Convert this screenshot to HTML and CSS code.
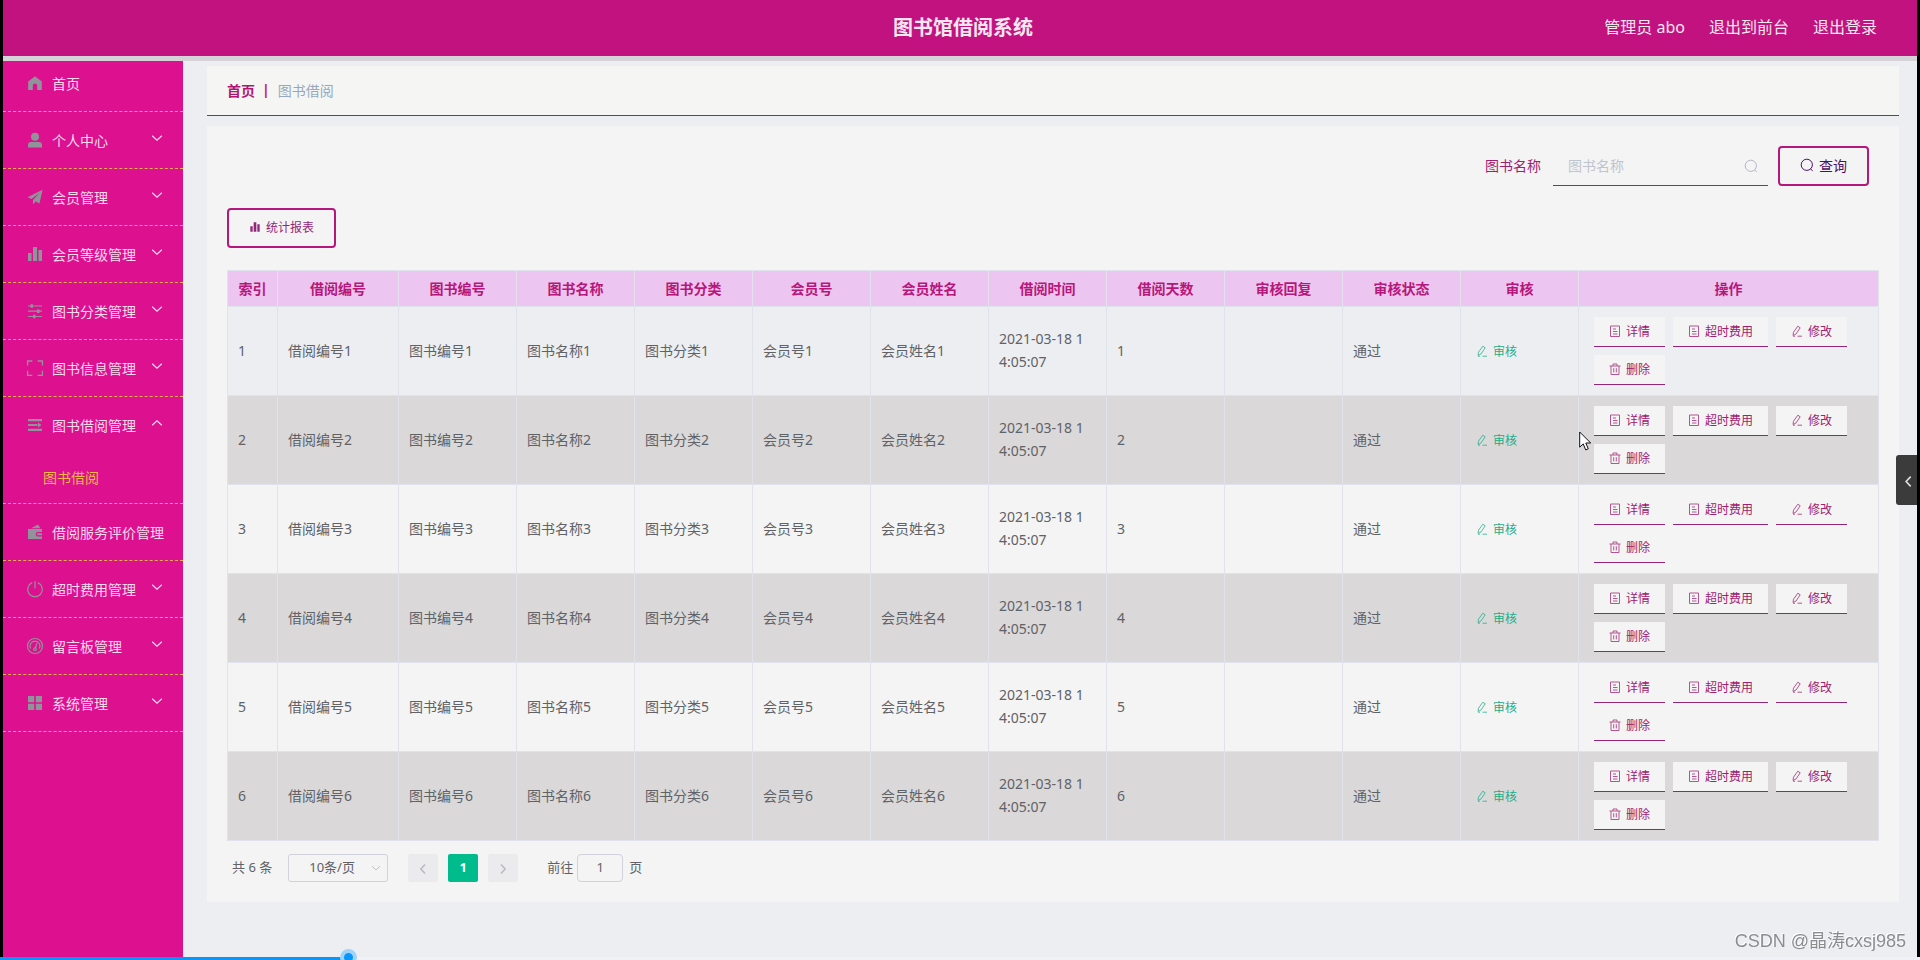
FILE: index.html
```html
<!DOCTYPE html>
<html lang="zh-CN">
<head>
  <meta charset="UTF-8">
  <meta name="viewport" content="width=device-width, initial-scale=1.0">
  <title>图书馆借阅系统</title>
  <link rel="stylesheet" href="styles.css">
</head>
<body>
  <!-- icons -->
  <svg class="sprite" aria-hidden="true">
    <symbol id="i-home" viewBox="0 0 18 18"><path fill="currentColor" d="M9 2.2 2.2 7.6V16h4.6v-4.2a2.2 2.2 0 0 1 4.4 0V16h4.6V7.6z"/></symbol>
    <symbol id="i-user" viewBox="0 0 18 18"><circle cx="9" cy="5.8" r="4" fill="currentColor"/><path fill="currentColor" d="M2 16.4v-2.2c0-2 1.2-3.2 3-3.2h8c1.800 0 3 1.200 3 3.200v2.200z"/></symbol>
    <symbol id="i-send" viewBox="0 0 18 18"><path fill="currentColor" d="M16.500 1.800 1.500 9.200l4 1.900L13.500 5l-6.500 7v4.500l2.500-3 4 2z"/></symbol>
    <symbol id="i-data" viewBox="0 0 18 18"><path fill="currentColor" d="M2 8h3.500v8H2zM7 2h4v14H7zM12.500 5H16v11h-3.500z"/></symbol>
    <symbol id="i-sliders" viewBox="0 0 18 18"><path stroke="currentColor" stroke-width="1.200" d="M2 4h14M2 9.200h14M2 14.500h14"/><path fill="currentColor" d="M4.500 2.200h2.500v3.600H4.500zM11 7.400h2.500V11H11zM7 12.700h2.500v3.600H7z"/></symbol>
    <symbol id="i-full" viewBox="0 0 18 18"><path fill="none" stroke="currentColor" stroke-width="1.300" d="M1.600 6.500V2h4.800M11.600 2h4.800v4.500M16.400 11.800v4.500h-4.800M6.400 16.300H1.600v-4.500"/></symbol>
    <symbol id="i-unfold" viewBox="0 0 18 18"><path fill="currentColor" d="M2 3h14v2.200H2zM2 8h9.500v2H2zM2 12.800h14V15H2zM12 6.500 15.500 9 12 11.500z"/></symbol>
    <symbol id="i-wallet" viewBox="0 0 18 18"><path fill="currentColor" d="M5 5.200 12 1.500l2.400 3.700zM2 6h14v3h-4a2.200 2.200 0 0 0 0 4.400h4V16H2z"/><path fill="currentColor" d="M12 10.300h4v2h-4a1 1 0 0 1 0-2z"/></symbol>
    <symbol id="i-power" viewBox="0 0 18 18"><path fill="none" stroke="currentColor" stroke-width="1.200" d="M6.200 2.600a7.300 7.300 0 1 0 5.600 0M9 1v7.500"/></symbol>
    <symbol id="i-meter" viewBox="0 0 18 18"><g fill="none" stroke="currentColor" stroke-width="1.200"><circle cx="9" cy="9" r="7.500"/><path d="M4.600 11.500A5 5 0 1 1 13.400 11.500M10.800 6.200 9.500 11"/><circle cx="9" cy="12.200" r="1.300"/></g></symbol>
    <symbol id="i-menu" viewBox="0 0 18 18"><path fill="currentColor" d="M2 2h6.200v6.200H2zM9.800 2H16v6.200H9.800zM2 9.800h6.200V16H2zM9.800 9.800H16V16H9.800z"/></symbol>
    <symbol id="i-down" viewBox="0 0 12 12"><path fill="none" stroke="currentColor" stroke-width="1.200" d="M1.200 3.800 6 8.300l4.800-4.500"/></symbol>
    <symbol id="i-left" viewBox="0 0 12 12"><path fill="none" stroke="currentColor" stroke-width="1.500" d="M8 1.500 3.800 6 8 10.500"/></symbol>
    <symbol id="i-right" viewBox="0 0 12 12"><path fill="none" stroke="currentColor" stroke-width="1.500" d="M4 1.500 8.200 6 4 10.500"/></symbol>
    <symbol id="i-search" viewBox="0 0 14 14"><g fill="none" stroke="currentColor"><circle cx="6.800" cy="6.800" r="5.600"/><path d="m10.500 11 2.200 1.800"/></g></symbol>
    <symbol id="i-doc" viewBox="0 0 12 12"><path fill="none" stroke="currentColor" d="M1.500 1h9v10.500h-9zM4 4h3M4 6.500h4.500M4 9h4.500"/></symbol>
    <symbol id="i-edit" viewBox="0 0 12 12"><path fill="none" stroke="currentColor" d="M2 10.500 2.500 7.200 6.800 1.200 9.200 2.800 5 9zM6.500 11.200h4.500M2 11.200h2"/></symbol>
    <symbol id="i-trash" viewBox="0 0 12 12"><path fill="none" stroke="currentColor" d="M.5 3h11M4 3V1h4v2M2 3v8.500h8V3M4.700 5.200v4.200M7.300 5.200v4.200"/></symbol>
  </svg>

  <div class="page">
    <header class="topbar">
      <h1>图书馆借阅系统</h1>
      <div class="topbar-right">
        <span>管理员 abo</span>
        <a href="#">退出到前台</a>
        <a href="#">退出登录</a>
      </div>
    </header>

    <div class="layout">
      <nav class="sidebar">
        <ul>
          <li><a href="#"><svg class="icon"><use href="#i-home"/></svg>首页</a></li>
          <li><a href="#"><svg class="icon"><use href="#i-user"/></svg>个人中心<svg class="arrow"><use href="#i-down"/></svg></a></li>
          <li><a href="#"><svg class="icon"><use href="#i-send"/></svg>会员管理<svg class="arrow"><use href="#i-down"/></svg></a></li>
          <li><a href="#"><svg class="icon"><use href="#i-data"/></svg>会员等级管理<svg class="arrow"><use href="#i-down"/></svg></a></li>
          <li><a href="#"><svg class="icon"><use href="#i-sliders"/></svg>图书分类管理<svg class="arrow"><use href="#i-down"/></svg></a></li>
          <li><a href="#"><svg class="icon"><use href="#i-full"/></svg>图书信息管理<svg class="arrow"><use href="#i-down"/></svg></a></li>
          <li class="open">
            <a href="#"><svg class="icon"><use href="#i-unfold"/></svg>图书借阅管理<svg class="arrow"><use href="#i-down"/></svg></a>
            <a href="#" class="sub">图书借阅</a>
          </li>
          <li><a href="#"><svg class="icon"><use href="#i-wallet"/></svg>借阅服务评价管理</a></li>
          <li><a href="#"><svg class="icon"><use href="#i-power"/></svg>超时费用管理<svg class="arrow"><use href="#i-down"/></svg></a></li>
          <li><a href="#"><svg class="icon"><use href="#i-meter"/></svg>留言板管理<svg class="arrow"><use href="#i-down"/></svg></a></li>
          <li><a href="#"><svg class="icon"><use href="#i-menu"/></svg>系统管理<svg class="arrow"><use href="#i-down"/></svg></a></li>
        </ul>
      </nav>

      <main class="main">
        <div class="breadcrumb">
          <a href="#">首页</a><span class="sep">|</span><span>图书借阅</span>
        </div>

        <section class="card">
          <form class="search" id="searchForm">
            <label for="bookName">图书名称</label>
            <div class="search-box">
              <input type="text" id="bookName" placeholder="图书名称">
              <svg><use href="#i-search"/></svg>
            </div>
            <button type="submit" class="btn btn-search"><svg><use href="#i-search"/></svg>查询</button>
          </form>

          <button type="button" class="btn btn-report"><svg><use href="#i-data"/></svg>统计报表</button>

          <table>
            <colgroup>
              <col class="col-index"><col class="col-code">
              <col><col><col><col><col><col><col><col><col><col>
              <col class="col-actions">
            </colgroup>
            <thead>
              <tr>
                <th>索引</th><th>借阅编号</th><th>图书编号</th><th>图书名称</th><th>图书分类</th>
                <th>会员号</th><th>会员姓名</th><th>借阅时间</th><th>借阅天数</th><th>审核回复</th>
                <th>审核状态</th><th>审核</th><th>操作</th>
              </tr>
            </thead>
            <tbody id="rows"></tbody>
          </table>

          <div class="pager">
            <span class="total">共 6 条</span>
            <div class="select">
              <select aria-label="每页条数"><option>10条/页</option><option>20条/页</option></select>
              <svg><use href="#i-down"/></svg>
            </div>
            <button type="button" class="page-btn" aria-label="上一页" disabled><svg><use href="#i-left"/></svg></button>
            <button type="button" class="page-btn current">1</button>
            <button type="button" class="page-btn" aria-label="下一页" disabled><svg><use href="#i-right"/></svg></button>
            <label for="jump" class="jump">前往</label>
            <input type="text" id="jump" value="1">
            <span>页</span>
          </div>
        </section>
      </main>
    </div>
  </div>

  <button type="button" class="drawer" aria-label="展开"><svg><use href="#i-left"/></svg></button>
  <div class="progress"><div class="played"></div></div>
  <div class="watermark">CSDN @晶涛cxsj985</div>
  <svg class="cursor" viewBox="0 0 13 20"><path fill="#fff" stroke="#111" d="M.7 1v15.200l3.500-3.300 2.500 6 2.600-1.100-2.500-5.800h4.900z"/></svg>

  <script>
    const rows = document.getElementById("rows");

    function button(icon, text) {
      return `<button type="button" class="op"><svg><use href="#i-${icon}"/></svg>${text}</button>`;
    }

    for (let i = 1; i <= 6; i++) {
      rows.innerHTML += `
        <tr>
          <td>${i}</td>
          <td>借阅编号${i}</td>
          <td>图书编号${i}</td>
          <td>图书名称${i}</td>
          <td>图书分类${i}</td>
          <td>会员号${i}</td>
          <td>会员姓名${i}</td>
          <td>2021-03-18 1<br>4:05:07</td>
          <td>${i}</td>
          <td></td>
          <td>通过</td>
          <td><button type="button" class="audit"><svg><use href="#i-edit"/></svg>审核</button></td>
          <td><div class="ops">
            ${button("doc", "详情")}${button("doc", "超时费用")}${button("edit", "修改")}${button("trash", "删除")}
          </div></td>
        </tr>`;
    }

    document.getElementById("searchForm").addEventListener("submit", function (e) {
      e.preventDefault();
    });
  </script>
</body>
</html>
```

FILE: styles.css
```css
*, *::after {
  box-sizing: border-box;
}
body {
  margin: 0;
  background-color: #000;
  font-family: "Noto Sans", "Noto Sans CJK SC", sans-serif;
  font-size: 14px;
  color: #606266;
}
button, input, select {
  font-family: inherit;
}
a {
  text-decoration: none;
}
.sprite {
  display: none;
}
.page {
  display: flex;
  flex-direction: column;
  min-height: 100vh;
  margin: 0 3px;
  background-color: #eceef2;
}

/* header */
.topbar {
  position: relative;
  z-index: 1;
  display: flex;
  align-items: center;
  justify-content: center;
  height: 61px;
  margin-bottom: -6px;
  padding: 0 0 4px 6px;
  background-color: #c1127f;
  border-bottom: 5px solid #d5d2d8;
  color: #f5e6f0;
}
.topbar h1 {
  margin: 0;
  font-size: 20px;
}
.topbar-right {
  position: absolute;
  right: 40px;
  display: flex;
  gap: 24px;
  font-size: 16px;
}
.topbar-right a {
  color: inherit;
}

.layout {
  display: flex;
  flex: 1;
}

/* sidebar */
.sidebar {
  flex: 0 0 180px;
  min-width: 0;
  background-color: #dd1190;
}
.sidebar ul {
  margin: 0;
  padding: 0;
  list-style: none;
}
.sidebar li {
  border-bottom: 1px dashed #e5ae4c;
}
.sidebar a {
  display: flex;
  align-items: center;
  height: 56px;
  padding: 0 20px 0 23px;
  color: #f8d9ee;
  white-space: nowrap;
}
.sidebar .icon {
  flex: none;
  width: 18px;
  height: 18px;
  margin-right: 8px;
  color: #909399;
}
.sidebar .arrow {
  width: 12px;
  height: 12px;
  margin-left: auto;
  margin-bottom: 4px;
}
.sidebar .open .arrow {
  transform: rotate(180deg);
}
.sidebar .sub {
  height: 50px;
  padding-left: 40px;
  padding-bottom: 2px;
  color: #f0b848;
}

/* content */
.main {
  flex: 1;
  min-width: 0;
  padding: 11px 18px 59px 24px;
}
.breadcrumb {
  display: flex;
  align-items: center;
  height: 50px;
  padding: 0 20px 2px;
  margin-bottom: 10px;
  background-color: #f5f5f3;
  border-bottom: 1px solid #94267a;
  color: #97a8be;
}
.breadcrumb a {
  color: #b01572;
  font-weight: bold;
}
.breadcrumb .sep {
  margin: 0 8px 0 7px;
  color: #c1127f;
  font-weight: bold;
}
.card {
  padding: 20px;
  background-color: #f4f4f4;
}
.search {
  display: flex;
  align-items: center;
  justify-content: flex-end;
  margin: 0 10px 22px;
}
.search label {
  margin-right: 12px;
  padding-bottom: 2px;
  color: #a02070;
}
.search-box {
  display: flex;
  align-items: center;
  width: 215px;
  height: 40px;
  margin-right: 10px;
  padding: 0 10px 0 15px;
  border-bottom: 1px solid #94267a;
}
.search-box input {
  flex: 1;
  min-width: 0;
  padding: 0;
  border: none;
  outline: none;
  background: none;
  font-size: 14px;
}
.search-box input::placeholder {
  color: #c0c4cc;
}
.search-box svg {
  width: 14px;
  height: 14px;
  color: #b4b8c2;
}
.btn {
  display: flex;
  align-items: center;
  justify-content: center;
  gap: 5px;
  height: 40px;
  padding: 0 20px 2px;
  background: none;
  border: 2px solid #b5177c;
  border-radius: 4px;
  cursor: pointer;
}
.btn-search {
  font-size: 14px;
  color: #4c0d68;
}
.btn-search svg {
  width: 14px;
  height: 14px;
}
.btn-report {
  margin-bottom: 22px;
  font-size: 12px;
  color: #94267a;
}
.btn-report svg {
  width: 12px;
  height: 12px;
}

/* table */
table {
  width: 100%;
  table-layout: fixed;
  border-collapse: collapse;
}
.col-index {
  width: 50px;
}
.col-code {
  width: 121px;
}
.col-actions {
  width: 300px;
}
th, td {
  border: 1px solid #e0e3ec;
}
th {
  height: 36px;
  padding: 0 0 2px;
  background-color: #ecc5f1;
  color: #b8177a;
}
td {
  height: 89px;
  padding: 0 10px 2px;
  line-height: 23px;
}
tbody tr:nth-child(even) {
  background-color: #dad8d9;
}
tbody tr:first-child {
  background-color: #edeef2;
}
.ops {
  display: flex;
  flex-wrap: wrap;
  gap: 8px;
  padding: 2px 0 0 5px;
}
.op, .audit {
  display: flex;
  align-items: center;
  gap: 5px;
  height: 30px;
  padding: 0 15px 2px;
  border: none;
  font-size: 12px;
  cursor: pointer;
}
.op {
  background-color: #f4f4f4;
  border-bottom: 1px solid #94267a;
  color: #a0206f;
}
.audit {
  padding: 2px 5px 0;
  background: none;
  color: #1bae8a;
}
.op svg, .audit svg {
  width: 12px;
  height: 12px;
  opacity: 0.75;
}

/* pagination */
.pager {
  display: flex;
  align-items: center;
  gap: 10px;
  height: 28px;
  margin: 13px 5px 0;
  font-size: 13px;
}
.pager span, .pager label {
  padding-bottom: 3px;
}
.total {
  margin-right: 6px;
}
.select {
  position: relative;
  margin-right: 10px;
}
.select select {
  display: block;
  width: 100px;
  height: 28px;
  padding: 0 20px 2px;
  appearance: none;
  background: none;
  border: 1px solid #d0d2dc;
  border-radius: 3px;
  font-size: 13px;
  color: #606266;
}
.select svg {
  position: absolute;
  top: 9px;
  right: 7px;
  width: 10px;
  height: 10px;
  color: #c0c4cc;
  pointer-events: none;
}
.page-btn {
  width: 30px;
  height: 28px;
  padding: 0 0 2px;
  border: none;
  border-radius: 2px;
  background-color: #ebebed;
  color: #b8bac2;
  font-size: 13px;
}
.page-btn svg {
  width: 12px;
  height: 12px;
  vertical-align: middle;
}
.page-btn.current {
  background-color: #00bb8c;
  color: #fff;
  font-weight: bold;
}
.jump {
  margin: 0 -6px 0 19px;
}
#jump {
  width: 46px;
  height: 28px;
  margin-right: -4px;
  padding: 0 0 2px;
  background: none;
  border: 1px solid #d0d2dc;
  border-radius: 4px;
  font-size: 13px;
  text-align: center;
  color: #606266;
}

/* things floating over the page */
.drawer {
  position: fixed;
  top: 455px;
  right: 3px;
  width: 21px;
  height: 50px;
  padding: 0 0 0 3px;
  border: none;
  border-radius: 3px 0 0 3px;
  background-color: #3b3b3b;
  color: #ddd;
}
.drawer svg {
  width: 13px;
  height: 13px;
  vertical-align: middle;
}
.progress {
  position: fixed;
  left: 0;
  right: 0;
  bottom: 0;
  height: 3px;
  background-color: #f0f1f6;
}
.played {
  position: relative;
  width: 349px;
  height: 3px;
  background-color: #0896fb;
}
.played::after {
  content: "";
  position: absolute;
  top: -8px;
  right: -8px;
  width: 17px;
  height: 17px;
  border: 4px solid #9fd3fa;
  border-radius: 50%;
  background-color: #0896fb;
}
.watermark {
  position: fixed;
  right: 14px;
  bottom: 8px;
  font-family: "Liberation Sans", "Noto Sans CJK SC", sans-serif;
  font-size: 18px;
  color: #8b8c90;
  text-shadow: -1px -1px 0 #fff;
}
.cursor {
  position: fixed;
  top: 431px;
  left: 1579px;
  width: 13px;
  height: 20px;
}
```
